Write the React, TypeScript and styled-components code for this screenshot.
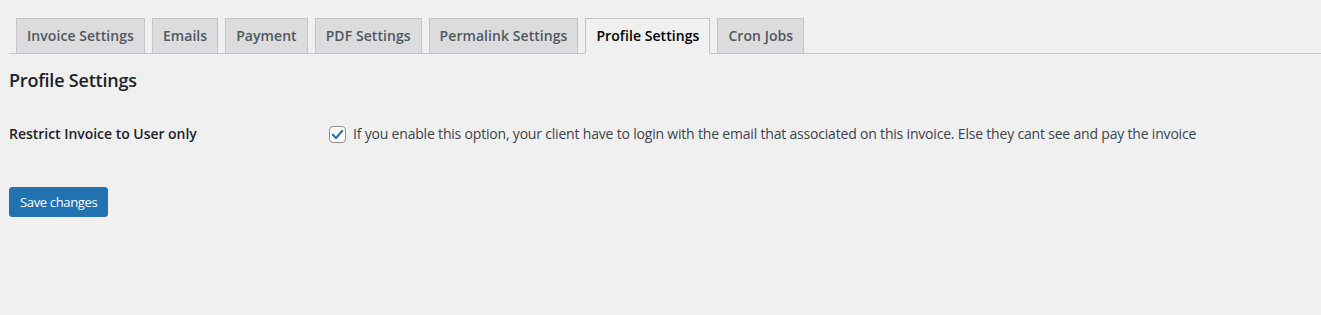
import React from "react";
import styled, { createGlobalStyle } from "styled-components";

const Global = createGlobalStyle`
  html, body { margin: 0; padding: 0; background: #f0f0f1; }
  body {
    font-family: "Open Sans", "Noto Sans", sans-serif;
    color: #3c434a;
    font-size: 13px;
  }
`;

const Wrap = styled.div`
  padding: 9px 0 0 9px;
  min-height: 306px;
`;

const TabBar = styled.nav`
  display: flex;
  align-items: flex-end;
  border-bottom: 1px solid #c3c4c7;
  padding-top: 9px;
  margin: 0;
`;

const Tab = styled.a<{ $active?: boolean }>`
  display: block;
  margin-left: 7px;
  margin-bottom: ${(p) => (p.$active ? "-1px" : "0")};
  padding: 5px 10px;
  border: 1px solid #c3c4c7;
  border-bottom: ${(p) => (p.$active ? "1px solid #f0f0f1" : "none")};
  background: ${(p) => (p.$active ? "#f0f0f1" : "#dcdcde")};
  color: ${(p) => (p.$active ? "#000" : "#50575e")};
  font-size: 14px;
  line-height: 24px;
  font-weight: 600;
  text-decoration: none;
  white-space: nowrap;
  letter-spacing: 0.06px;
`;

const Title = styled.h2`
  margin: 14px 0 0;
  font-size: 18px;
  line-height: 24px;
  font-weight: 600;
  color: #1d2327;
  letter-spacing: -0.2px;
`;

const Row = styled.div`
  display: flex;
  align-items: center;
  margin-top: 32px;
`;

const Label = styled.div`
  width: 320px;
  font-size: 14px;
  font-weight: 600;
  color: #1d2327;
  line-height: 20px;
  letter-spacing: -0.03px;
`;

const Field = styled.label`
  display: flex;
  align-items: center;
  gap: 7px;
  font-size: 14px;
  line-height: 20px;
  color: #3c434a;
  letter-spacing: -0.19px;
`;

const Check = styled.span`
  width: 17px;
  height: 17px;
  box-sizing: border-box;
  border: 1px solid #8c8f94;
  border-radius: 4px;
  background: #fff;
  display: flex;
  align-items: center;
  justify-content: center;
  flex: none;
`;

const Button = styled.button`
  margin-top: 43px;
  height: 30px;
  padding: 0 10px;
  background: #2271b1;
  border: 1px solid #2271b1;
  border-radius: 3px;
  color: #fff;
  font-family: inherit;
  font-size: 13px;
  letter-spacing: -0.35px;
  cursor: pointer;
`;

const tabs = [
  "Invoice Settings",
  "Emails",
  "Payment",
  "PDF Settings",
  "Permalink Settings",
  "Profile Settings",
  "Cron Jobs",
];

export default function App() {
  return (
    <>
      <Global />
      <Wrap>
        <TabBar>
          {tabs.map((t) => (
            <Tab key={t} $active={t === "Profile Settings"} href="#">
              {t}
            </Tab>
          ))}
        </TabBar>
        <Title>Profile Settings</Title>
        <Row>
          <Label>Restrict Invoice to User only</Label>
          <Field>
            <Check>
              <svg width="15" height="15" viewBox="0 0 14 14">
                <path d="M2.6 7.2 L5.6 10.2 L11.4 3.6" fill="none" stroke="#2271b1" strokeWidth="2" strokeLinecap="round" strokeLinejoin="round" />
              </svg>
            </Check>
            If you enable this option, your client have to login with the email that associated on this invoice. Else they cant see and pay the invoice
          </Field>
        </Row>
        <Button>Save changes</Button>
      </Wrap>
    </>
  );
}
